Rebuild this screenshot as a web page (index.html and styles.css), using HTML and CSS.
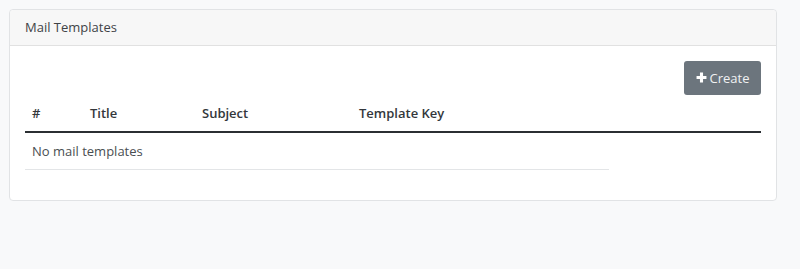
FILE: index.html
```html
<!DOCTYPE html>
<html>
<head>
<meta charset="utf-8">
<title>Mail Templates</title>
<link rel="stylesheet" href="styles.css">
</head>
<body>
<div class="page">
  <div class="card">
    <div class="card-header">Mail Templates</div>
    <div class="card-body">
      <div class="toolbar">
        <button class="btn">
          <svg class="plus" viewBox="0 0 10 10" width="11" height="11"><path d="M3.6 0.5h2.8v3.1h3.1v2.8h-3.1v3.1h-2.8v-3.1h-3.1v-2.8h3.1z" fill="#fff"/></svg>
          <span>Create</span>
        </button>
      </div>
      <table class="table">
        <colgroup>
          <col class="c-num"><col class="c-title"><col class="c-subject"><col class="c-key"><col class="c-actions">
        </colgroup>
        <thead>
          <tr><th>#</th><th>Title</th><th>Subject</th><th>Template Key</th><th></th></tr>
        </thead>
        <tbody>
          <tr><td colspan="4" class="empty">No mail templates</td></tr>
        </tbody>
      </table>
    </div>
  </div>
</div>
</body>
</html>
```

FILE: styles.css
```css
html, body {
  margin: 0;
  padding: 0;
  background: #f8f9fa;
}
body {
  font-family: "Open Sans", "Noto Sans", sans-serif;
  font-size: 13px;
  color: #212529;
}
.page {
  padding: 9px 23px 0 9px;
}
.card {
  background: #fff;
  border: 1px solid #e1e3e5;
  border-radius: 4px;
}
.card-header {
  height: 35px;
  line-height: 35px;
  padding: 0 15px;
  background: #f7f7f7;
  border-bottom: 1px solid #e1e1e1;
  border-radius: 4px 4px 0 0;
  color: #3f4347;
  font-size: 13px;
}
.card-body {
  padding: 15px;
}
.toolbar {
  display: flex;
  justify-content: flex-end;
}
.btn {
  display: flex;
  align-items: center;
  gap: 3px;
  height: 34px;
  width: 77px;
  justify-content: center;
  padding: 0 0 1px 0;
  border: none;
  border-radius: 3px;
  background: #6c757d;
  color: #f0f1f2;
  font-family: inherit;
  font-size: 13px;
}
.plus {
  display: block;
}
.table {
  width: 100%;
  border-collapse: collapse;
  table-layout: fixed;
  margin-bottom: 15px;
}
.c-num { width: 58px; }
.c-title { width: 112px; }
.c-subject { width: 157px; }
.c-key { width: 257px; }
.c-actions { width: 152px; }
.table th {
  text-align: left;
  font-weight: 600;
  color: #33373b;
  padding: 8px 7px;
  line-height: 20px;
  border-bottom: 2px solid #2b2f33;
}
.table td {
  padding: 8px 7px;
  line-height: 20px;
  color: #4a4e52;
  border-bottom: 1px solid #e3e5e7;
}
```
